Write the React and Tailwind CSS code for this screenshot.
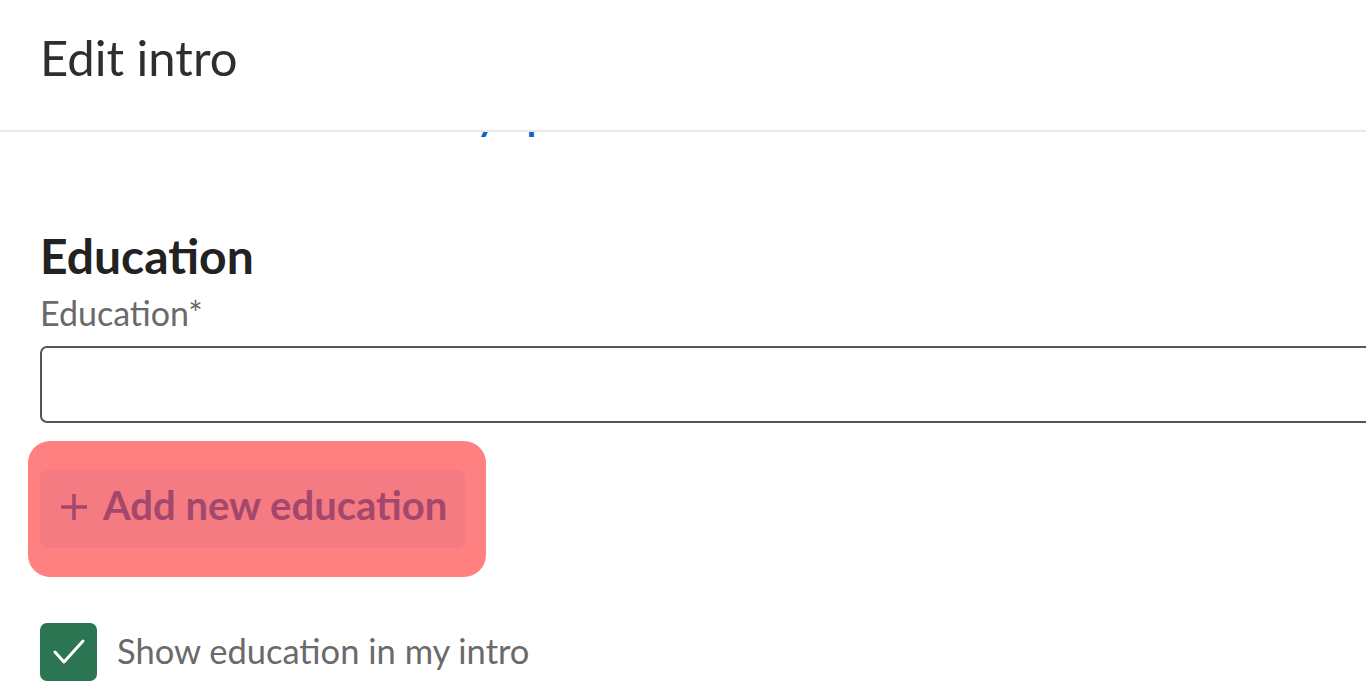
import React from "react";

const font = { fontFamily: "Lato, 'Open Sans', sans-serif" };

const App = () => {
  return (
    <div className="w-[1366px] h-[688px] overflow-hidden bg-white" style={font}>
      {/* header */}
      <div className="h-[132px] border-b-2 border-[#e8e8e8] pl-[40px] pt-[27px] relative z-10 bg-white">
        <h1 className="text-[49px] leading-[60px] font-normal text-[#2e2e2e]">Edit intro</h1>
      </div>

      {/* scrolled-off link, only descenders peek out */}
      <div className="h-[9px] overflow-hidden relative">
        <div className="absolute left-[50px] -top-[38px] text-[38px] leading-[45px] font-bold text-[#0a66c2] whitespace-nowrap">
          Learn more about industry options
        </div>
      </div>

      <div className="pl-[40px] pt-[89px]">
        <h2 className="text-[48px] leading-[52px] font-bold text-[#222]">Education</h2>
        <div className="mt-[10px] text-[34px] leading-[42px] text-[#6a6a6a]">Education*</div>
        <div className="mt-[12px] h-[77px] w-[1400px] rounded-[7px] border-2 border-[#555]"></div>

        <div className="-ml-[12px] mt-[18px] w-[458px] h-[136px] rounded-[22px] bg-[#ff8080] flex items-center px-[12px]">
          <div className="h-[78px] w-[425px] rounded-[8px] bg-[#f47b81] flex items-center pl-[20px] pb-[8px] gap-[15px] text-[#a4476c]">
            <svg width="28" height="28" viewBox="0 0 28 28" fill="none" className="shrink-0 mt-[4px]">
              <path d="M14 1 V27 M1 14 H27" stroke="#a4476c" strokeWidth="3.5" />
            </svg>
            <span className="text-[40px] leading-none font-bold">Add new education</span>
          </div>
        </div>

        <div className="mt-[46px] flex items-center gap-[20px]">
          <div className="w-[57px] h-[58px] rounded-[7px] bg-[#2c7552] flex items-center justify-center">
            <svg width="34" height="28" viewBox="0 0 34 28" fill="none">
              <path d="M3 14 L12 24 L31 3" stroke="white" strokeWidth="3" strokeLinecap="round" strokeLinejoin="round" />
            </svg>
          </div>
          <span className="text-[34.5px] leading-none text-[#6a6a6a] -mt-[2px]">Show education in my intro</span>
        </div>
      </div>
    </div>
  );
};

export default App;
